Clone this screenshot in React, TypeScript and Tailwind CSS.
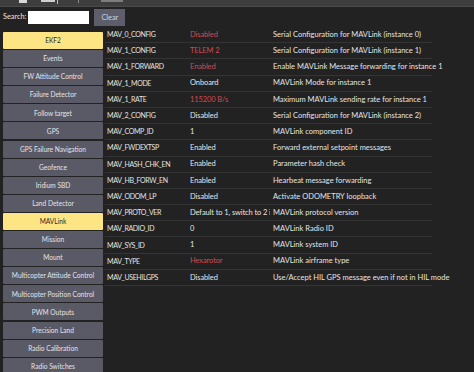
import React from "react";

const groups = [
  "EKF2",
  "Events",
  "FW Attitude Control",
  "Failure Detector",
  "Follow target",
  "GPS",
  "GPS Failure Navigation",
  "Geofence",
  "Iridium SBD",
  "Land Detector",
  "MAVLink",
  "Mission",
  "Mount",
  "Multicopter Attitude Control",
  "Multicopter Position Control",
  "PWM Outputs",
  "Precision Land",
  "Radio Calibration",
  "Radio Switches",
];

const selected = new Set(["EKF2", "MAVLink"]);

const rows: [string, string, boolean, string][] = [
  ["MAV_0_CONFIG", "Disabled", true, "Serial Configuration for MAVLink (instance 0)"],
  ["MAV_1_CONFIG", "TELEM 2", true, "Serial Configuration for MAVLink (instance 1)"],
  ["MAV_1_FORWARD", "Enabled", true, "Enable MAVLink Message forwarding for instance 1"],
  ["MAV_1_MODE", "Onboard", false, "MAVLink Mode for instance 1"],
  ["MAV_1_RATE", "115200 B/s", true, "Maximum MAVLink sending rate for instance 1"],
  ["MAV_2_CONFIG", "Disabled", false, "Serial Configuration for MAVLink (instance 2)"],
  ["MAV_COMP_ID", "1", false, "MAVLink component ID"],
  ["MAV_FWDEXTSP", "Enabled", false, "Forward external setpoint messages"],
  ["MAV_HASH_CHK_EN", "Enabled", false, "Parameter hash check"],
  ["MAV_HB_FORW_EN", "Enabled", false, "Hearbeat message forwarding"],
  ["MAV_ODOM_LP", "Disabled", false, "Activate ODOMETRY loopback"],
  ["MAV_PROTO_VER", "Default to 1, switch to 2 if GCS sends version 2", false, "MAVLink protocol version"],
  ["MAV_RADIO_ID", "0", false, "MAVLink Radio ID"],
  ["MAV_SYS_ID", "1", false, "MAVLink system ID"],
  ["MAV_TYPE", "Hexarotor", true, "MAVLink airframe type"],
  ["MAV_USEHILGPS", "Disabled", false, "Use/Accept HIL GPS message even if not in HIL mode"],
];

export default function App() {
  return (
    <div
      className="w-[474px] h-[372px] overflow-hidden bg-[#222222] text-[#dcdcdc] text-[7.5px] leading-none"
      style={{ fontFamily: 'Lato, "Liberation Sans", Arial, sans-serif' }}
    >
      {/* top toolbar (cropped) */}
      <div className="h-[7px] bg-[#3e3e3e] border-b border-[#4a4a4a] flex items-start">
        <div className="ml-[19px] w-[8px] h-[3px] bg-[#d8d8d8]" />
        <div className="ml-[14px] w-[14px] h-[2px] bg-[#cfcfcf]" />
        <div className="ml-[2px] w-[1px] h-[4px] bg-[#bdbdbd]" />
        <div className="ml-[20px] w-[1px] h-[3px] bg-[#8a8a8a]" />
        <div className="ml-[22px] w-[22px] h-[2px] bg-[#9a9a9a] opacity-70" />
      </div>

      {/* search row */}
      <div className="h-[20px] flex items-center pl-[3px]">
        <span className="text-[#e6e6e6] text-[7.3px]">Search:</span>
        <div className="ml-[2px] w-[61px] h-[13px] bg-white" />
        <div className="ml-[5px] w-[31px] h-[17px] bg-[#5d5d6b] flex items-center justify-center text-[#d4d4dc] text-[7.3px] mt-[1px]">
          Clear
        </div>
      </div>

      <div className="flex">
        {/* left groups */}
        <div className="ml-[3px] w-[100px] pt-[5px] flex flex-col gap-[1.1px] text-[6.6px]">
          {groups.map((g) => (
            <div
              key={g}
              className={
                selected.has(g)
                  ? "h-[17px] flex items-center justify-center bg-[#fde583] text-[#2a2a2a] rounded-[1px]"
                  : "h-[17px] flex items-center justify-center bg-[#5a5a66] text-[#e2e2e8] rounded-[1px]"
              }
            >
              {g}
            </div>
          ))}
        </div>

        {/* table */}
        <div className="ml-[2px] w-[327px] flex flex-col">
          {rows.map(([n, v, red, d]) => (
            <div
              key={n}
              className="h-[16.2px] shrink-0 flex items-center border-b border-[#343434] whitespace-nowrap"
            >
              <div className="w-[85px] shrink-0 pl-[2px] text-[#e4e4e4] text-[7px] tracking-[-0.35px]">{n}</div>
              <div
                className={
                  red
                    ? "w-[80px] mr-[3px] shrink-0 overflow-hidden text-[#d04a55] tracking-[-0.1px]"
                    : "w-[80px] mr-[3px] shrink-0 overflow-hidden text-[#e4e4e4] tracking-[-0.1px]"
                }
              >
                {v}
              </div>
              <div className="text-[#e4e4e4]">{d}</div>
            </div>
          ))}
        </div>
      </div>
    </div>
  );
}
